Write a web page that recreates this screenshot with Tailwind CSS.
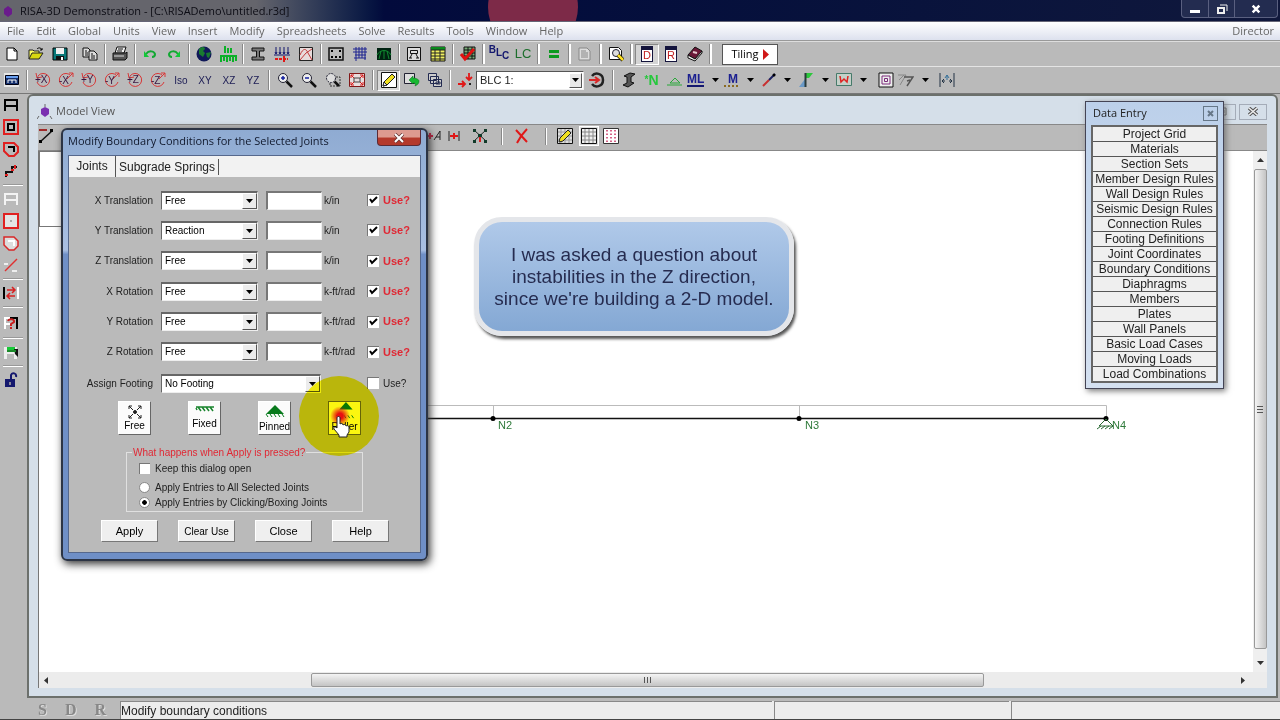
<!DOCTYPE html>
<html lang="en">
<head>
    <meta charset="UTF-8">
    <meta name="viewport" content="width=device-width, initial-scale=1.0">
    <title>RISA-3D Demonstration</title>
    <script src="https://cdn.jsdelivr.net/npm/@tailwindcss/browser@4"></script>
</head>
<body class="relative flex h-screen flex-col overflow-hidden bg-[#bababa] font-['Liberation_Sans',Arial,sans-serif] text-[11px] text-[#222]">

    <!-- Title bar -->
    <header class="relative flex h-[22px] shrink-0 items-center overflow-hidden border-b border-[#667] bg-linear-to-r from-[#65656c] from-20% via-[#020a3c] via-30% to-[#10183c] font-['Open_Sans',sans-serif]">
        <svg class="ml-[2px] size-3" viewBox="0 0 12 12"><path d="M6 1l4 3v5l-4 3-4-3V4z" fill="#6a1b8c"/></svg>
        <h1 class="ml-[6px] flex-1 text-[11px] leading-5 text-[#0c0c14]">RISA-3D Demonstration - [C:\RISADemo\untitled.r3d]</h1>
        <div class="absolute -top-[38px] left-[488px] size-[90px] rounded-full bg-[#7d2a48]"></div>
        <div class="mr-[2px] flex h-[18px] self-start rounded-b border border-t-0 border-[#5a6080] bg-[#232c50]">
            <button aria-label="Minimize" class="flex w-[27px] items-center justify-center border-r border-[#5a6080]"><svg class="size-3" viewBox="0 0 12 12"><path d="M1 7h10v3H1z" fill="#fff"/></svg></button>
            <button aria-label="Restore" class="flex w-[26px] items-center justify-center border-r border-[#5a6080]"><svg class="size-3" viewBox="0 0 12 12" fill="none" stroke="#eee" stroke-width="2"><path d="M2 5h6v5H2z"/><path d="M4 2h7v6" stroke-width="1"/></svg></button>
            <button aria-label="Close" class="flex w-[42px] items-center justify-center"><svg class="size-[10px]" viewBox="0 0 12 12" stroke="#fff" stroke-width="3"><path d="M2 2l8 8M10 2l-8 8"/></svg></button>
        </div>
    </header>

    <!-- Menu -->
    <nav class="flex h-[19px] shrink-0 items-center gap-[12px] border-b border-[#999] bg-linear-to-b from-white to-[#dde1ee] pr-[6px] pl-[7px] font-['Open_Sans',sans-serif] text-[11px] text-[#666]">
        <a href="#">File</a><a href="#">Edit</a><a href="#">Global</a><a href="#">Units</a><a href="#">View</a><a href="#">Insert</a><a href="#">Modify</a><a href="#">Spreadsheets</a><a href="#">Solve</a><a href="#">Results</a><a href="#">Tools</a><a href="#">Window</a><a href="#">Help</a>
        <a href="#" class="ml-auto">Director</a>
    </nav>

    <!-- Main toolbar -->
    <div class="flex h-[26px] shrink-0 items-center border-t border-b border-t-[#ddd] border-b-[#e4e4e4]">
        <button aria-label="New" class="flex w-6 justify-center"><svg class="size-4" viewBox="0 0 16 16"><path d="M3 2h7l3 3v9H3z" fill="#fff" stroke="#000"/><path d="M10 2v3h3" fill="none" stroke="#000"/></svg></button>
        <button aria-label="Open" class="flex w-6 justify-center"><svg class="size-4" viewBox="0 0 16 16"><path d="M1 13V4h4l1 1h5v3" fill="#ffff60" stroke="#222"/><path d="M1 13l3-6h11l-4 6z" fill="#d8d810" stroke="#222"/><path d="M9 3c2-2 4-1 5 1m0-2v2h-2" fill="none" stroke="#000"/></svg></button>
        <button aria-label="Save" class="flex w-6 justify-center"><svg class="size-4" viewBox="0 0 16 16"><path d="M1 2h14v12H1z" fill="#087878" stroke="#000"/><path d="M4 2h8v6H4z" fill="#eee"/><path d="M4 10h8v4H4z" fill="#111"/><path d="M9 11h2v3H9z" fill="#fff"/></svg></button>
        <span class="mx-[2px] h-[20px] w-[2px] border-l border-[#888] bg-white"></span>
        <button aria-label="Copy" class="flex w-6 justify-center"><svg class="size-4" viewBox="0 0 16 16" fill="#ddd" stroke="#111"><path d="M1 2h5l2 2v7H1z"/><path d="M7 5h5l3 3v6H7z"/><path d="M3 5h2M3 7h3M3 9h3M9 8h2M9 10h4M9 12h4"/></svg></button>
        <span class="mx-[2px] h-[20px] w-[2px] border-l border-[#888] bg-white"></span>
        <button aria-label="Print" class="flex w-6 justify-center"><svg class="size-4" viewBox="0 0 16 16"><path d="M5 1h9l-2 6H3z" fill="#eee" stroke="#111"/><path d="M6 3h5M5 5h5" stroke="#111"/><path d="M1 7h13l1-1v6l-2 2H1z" fill="#555" stroke="#111"/><path d="M2 10h10" stroke="#ddd"/></svg></button>
        <span class="mx-[2px] h-[20px] w-[2px] border-l border-[#888] bg-white"></span>
        <button aria-label="Undo" class="flex w-6 justify-center"><svg class="size-4" viewBox="0 0 16 16" fill="none" stroke="#12a832" stroke-width="2"><path d="M4 8c3-4 8-3 9 0 0 2-1 3-3 3"/><path d="M2 5v6h5z" fill="#12c838" stroke="none"/></svg></button>
        <button aria-label="Redo" class="flex w-6 justify-center"><svg class="size-4" viewBox="0 0 16 16" fill="none" stroke="#12a832" stroke-width="2"><path d="M12 8c-3-4-8-3-9 0 0 2 1 3 3 3"/><path d="M14 5v6H9z" fill="#12c838" stroke="none"/></svg></button>
        <span class="mx-[2px] h-[20px] w-[2px] border-l border-[#888] bg-white"></span>
        <button aria-label="Global parameters" class="flex w-6 justify-center"><svg class="size-4" viewBox="0 0 16 16"><circle cx="8" cy="8" r="7.5" fill="#101858"/><path d="M3 3c3-3 6-2 6 0L7 5l2 2-2 4-4-3zM10 7l5-1-2 6-2-1z" fill="#197a30"/></svg></button>
        <button aria-label="Units" class="flex w-6 justify-center"><svg class="size-[18px]" viewBox="0 0 18 18" fill="#0cb028"><path d="M5 1h2v7H5zM8 3h2v5H8zM11 3h2v5h-2zM1 10h2v7H1zM4 10h2v6H4zM7 10h2v7H7zM10 10h2v6h-2zM13 10h2v7h-2zM16 10h2v6h-2z"/><path d="M1 10h17v2H1z"/></svg></button>
        <span class="mx-[2px] h-[20px] w-[2px] border-l border-[#888] bg-white"></span>
        <button aria-label="Sections" class="flex w-6 justify-center"><svg class="size-4" viewBox="0 0 16 16"><path d="M2 2h12v3H9.500v6H14v3H2v-3h4.500V5H2z" fill="#777" stroke="#111"/></svg></button>
        <button aria-label="Loads" class="flex w-6 justify-center"><svg class="size-4" viewBox="0 0 16 16" fill="none" stroke="#14186e"><path d="M0 9h16M2 1v7M6 1v7M10 1v7M14 1v7M1 6l1 2 1-2M5 6l1 2 1-2M9 6l1 2 1-2M13 6l1 2 1-2"/><path d="M1 13h13M10 10v6" stroke="#e01818" stroke-width="2" stroke-dasharray="3 1"/></svg></button>
        <button aria-label="Design" class="flex w-6 justify-center"><svg class="size-4" viewBox="0 0 16 16"><path d="M1.500 1.500h13v13h-13z" fill="#e8dcdc" stroke="#222"/><path d="M2 9c3-7 6-7 8-2l4 7M2 14l6-7 6-4" fill="none" stroke="#c23b3b"/></svg></button>
        <span class="mx-[2px] h-[20px] w-[2px] border-l border-[#888] bg-white"></span>
        <button aria-label="Joints" class="flex w-6 justify-center"><svg class="size-4" viewBox="0 0 16 16"><path d="M1 2h14v12H1z" fill="#bbb" stroke="#111" stroke-width="1.500"/><path d="M3 4h2v2H3zM11 4h2v2h-2zM3 10h2v2H3zM7 10h2v2H7zM11 10h2v2h-2z" fill="#000"/></svg></button>
        <button aria-label="Grid" class="flex w-6 justify-center"><svg class="size-4" viewBox="0 0 16 16" fill="none" stroke="#1c2390"><path d="M4 1v14M7 1v11M10 1v11M13 1v13M1 3h14M1 6h14M3 9h11M2 12h12"/></svg></button>
        <button aria-label="Deflection" class="flex w-6 justify-center"><svg class="size-4" viewBox="0 0 16 16"><path d="M1 2h14v12H1z" fill="#021"/><path d="M1 9c3-6 11-6 14 0M8 4v9M5 5l-2 8M11 5l2 8" fill="none" stroke="#118a30"/></svg></button>
        <span class="mx-[2px] h-[20px] w-[2px] border-l border-[#888] bg-white"></span>
        <button aria-label="Model view" class="flex w-6 justify-center"><svg class="size-4" viewBox="0 0 16 16" fill="none" stroke="#111"><path d="M1.500 1.500h13v13h-13z" fill="#ddd"/><path d="M4.500 4.500h7v3h-7zM4 12l2-4M12 12l-2-4M3 12h3M10 12h3"/></svg></button>
        <button aria-label="Spreadsheet" class="flex w-6 justify-center"><svg class="size-4" viewBox="0 0 16 16"><path d="M1 1h14v14H1z" fill="#f0f060" stroke="#111"/><path d="M1 1h14v3H1z" fill="#0a8a1c"/><path d="M1 4h14M1 7h14M1 10h14M1 13h14M5 4v11M10 4v11" stroke="#222"/></svg></button>
        <span class="mx-[2px] h-[20px] w-[2px] border-l border-[#888] bg-white"></span>
        <button aria-label="Check" class="flex w-6 justify-center"><svg class="size-[18px]" viewBox="0 0 18 18"><path d="M5 2h11v12H5z" fill="#7a7" stroke="#111"/><path d="M5 5h11M5 8h11M5 11h11M9 2v12M13 2v12" stroke="#111"/><path d="M2 9l4 5L15 4" fill="none" stroke="#e01010" stroke-width="3"/></svg></button>
        <span class="mx-[2px] h-[20px] w-[3px] border-l border-[#888] bg-white"></span>
        <button aria-label="Basic load cases" class="flex h-5 w-6 items-start justify-center text-[10px] leading-3 font-bold text-[#14186e]"><span>B</span><span class="mt-[3px]">L</span><span class="mt-[6px]">C</span></button>
        <button aria-label="Load combinations" class="flex w-6 justify-center text-[13px] text-[#1c6e2c]">LC</button>
        <span class="mx-[2px] h-[20px] w-[3px] border-l border-[#888] bg-white"></span>
        <button aria-label="Solve" class="flex w-6 justify-center"><svg class="size-4" viewBox="0 0 16 16"><path d="M3 4h10v3H3zM3 9h10v3H3z" fill="#0c9a20"/></svg></button>
        <span class="mx-[2px] h-[20px] w-[3px] border-l border-[#888] bg-white"></span>
        <button aria-label="Report" class="flex w-6 justify-center"><svg class="size-4" viewBox="0 0 16 16" stroke="#888"><path d="M2 2h8l3 3v9H2z" fill="#ddd"/><path d="M4 5h5M4 7h7M4 9h7M4 11h7"/></svg></button>
        <span class="mx-[2px] h-[20px] w-[3px] border-l border-[#888] bg-white"></span>
        <button aria-label="Find" class="flex w-6 justify-center"><svg class="size-4" viewBox="0 0 16 16"><path d="M1.500 1.500h9l3 3v9h-12z" fill="#fff" stroke="#111"/><circle cx="8" cy="7" r="3.500" fill="#ddd" stroke="#223"/><path d="M10 9l5 5" stroke="#111" stroke-width="4"/><path d="M10 9l5 5" stroke="#ffe020" stroke-width="2.500"/></svg></button>
        <span class="mx-[2px] h-[20px] w-[3px] border-l border-[#888] bg-white"></span>
        <button aria-label="Data entry" class="flex h-[21px] w-6 items-center justify-center border border-t-[#888] border-r-white border-b-white border-l-[#888] bg-[#d4d4d4]"><span class="h-4 w-3 border border-t-4 border-[#14143c] bg-white text-[11px] leading-[11px] text-[#c02020]">D</span></button>
        <button aria-label="Results" class="flex w-6 justify-center"><span class="h-4 w-3 border border-t-4 border-[#14143c] bg-white text-[11px] leading-[11px] text-[#c02020]">R</span></button>
        <button aria-label="Help" class="flex w-6 justify-center"><svg class="size-4" viewBox="0 0 16 16"><path d="M1 9l7-8 7 4-7 8z" fill="#6a1838" stroke="#111"/><path d="M1 9v3l7 3 7-8V5l-7 8z" fill="#eee" stroke="#111"/><path d="M6 6l4 1" stroke="#e8c8d0" stroke-width="2"/></svg></button>
        <span class="mx-[2px] h-[20px] w-[3px] border-l border-[#888] bg-white"></span>
        <button class="ml-2 flex h-[21px] w-[56px] items-center justify-center gap-1 border border-[#555] bg-white font-['Open_Sans',sans-serif] text-[11px] text-black">Tiling <svg class="h-[11px] w-[6px]" viewBox="0 0 6 11"><path d="M0 0l6 5.500L0 11z" fill="#d01818"/></svg></button>
    </div>

    <!-- View toolbar -->
    <div class="flex h-[27px] shrink-0 items-center border-b border-[#777]">
        <button aria-label="Window" class="flex h-[19px] w-[23px] items-center justify-center"><svg class="size-4" viewBox="0 0 16 16"><path d="M0 1h15v14H0z" fill="#e6e6e6"/><path d="M1.500 3.500h13v9h-13z" fill="#15306e" stroke="#001"/><path d="M2 4h12v2H2z" fill="#6aa0f0"/><path d="M4 11V8h8v3M8 8v3" fill="none" stroke="#fff"/></svg></button>
        <span class="mx-[3px] h-[20px] w-[2px] border-l border-[#888] bg-white"></span>
        <button class="relative flex w-[23px] justify-center"><svg class="size-4" viewBox="0 0 16 16" fill="none" stroke="#d83838"><path d="M3 4a6.500 6.500 0 1 1-1 6"/><path d="M1 1l1 5 5-1"/></svg><span class="absolute top-[3px] left-[4px] text-[10px] leading-[10px] text-[#3a1440]">+X</span></button>
        <button class="relative flex w-[23px] justify-center"><svg class="size-4" viewBox="0 0 16 16" fill="none" stroke="#d83838"><path d="M13 4a6.500 6.500 0 1 0 1 6"/><path d="M9 7l6-6M11 1h4v4"/></svg><span class="absolute top-[4px] left-[5px] text-[10px] leading-[10px] text-[#3a1440]">-X</span></button>
        <button class="relative flex w-[23px] justify-center"><svg class="size-4" viewBox="0 0 16 16" fill="none" stroke="#d83838"><path d="M3 4a6.500 6.500 0 1 1-1 6"/><path d="M1 1l1 5 5-1"/></svg><span class="absolute top-[3px] left-[4px] text-[10px] leading-[10px] text-[#3a1440]">+Y</span></button>
        <button class="relative flex w-[23px] justify-center"><svg class="size-4" viewBox="0 0 16 16" fill="none" stroke="#d83838"><path d="M13 4a6.500 6.500 0 1 0 1 6"/><path d="M9 7l6-6M11 1h4v4"/></svg><span class="absolute top-[4px] left-[5px] text-[10px] leading-[10px] text-[#3a1440]">-Y</span></button>
        <button class="relative flex w-[23px] justify-center"><svg class="size-4" viewBox="0 0 16 16" fill="none" stroke="#d83838"><path d="M3 4a6.500 6.500 0 1 1-1 6"/><path d="M1 1l1 5 5-1"/></svg><span class="absolute top-[3px] left-[4px] text-[10px] leading-[10px] text-[#3a1440]">+Z</span></button>
        <button class="relative flex w-[23px] justify-center"><svg class="size-4" viewBox="0 0 16 16" fill="none" stroke="#d83838"><path d="M13 4a6.500 6.500 0 1 0 1 6"/><path d="M9 7l6-6M11 1h4v4"/></svg><span class="absolute top-[4px] left-[5px] text-[10px] leading-[10px] text-[#3a1440]">-Z</span></button>
        <button class="w-6 text-[10px] text-[#1c1c54]">Iso</button>
        <button class="w-6 text-[10px] text-[#1c1c54]">XY</button>
        <button class="w-6 text-[10px] text-[#1c1c54]">XZ</button>
        <button class="w-6 text-[10px] text-[#1c1c54]">YZ</button>
        <span class="mx-[3px] h-[20px] w-[2px] border-l border-[#888] bg-white"></span>
        <button aria-label="Zoom in" class="flex w-6 justify-center"><svg class="size-4" viewBox="0 0 16 16" fill="none"><circle cx="6" cy="6" r="4.500" fill="#eee" stroke="#223"/><path d="M9.500 9.500L15 15" stroke="#111" stroke-width="2.500"/><path d="M4 6h4M6 4v4" stroke="#1420a0" stroke-width="1.500"/></svg></button>
        <button aria-label="Zoom out" class="flex w-6 justify-center"><svg class="size-4" viewBox="0 0 16 16" fill="none"><circle cx="6" cy="6" r="4.500" fill="#eee" stroke="#223"/><path d="M9.500 9.500L15 15" stroke="#111" stroke-width="2.500"/><path d="M4 6h4" stroke="#1420a0" stroke-width="1.500"/></svg></button>
        <button aria-label="Zoom box" class="flex w-6 justify-center"><svg class="size-4" viewBox="0 0 16 16" fill="none"><path d="M5 5h10v9H5z" stroke="#333" stroke-dasharray="2 1"/><circle cx="6" cy="6" r="4.500" fill="#ddd" stroke="#223" stroke-dasharray="2 1"/><path d="M9.500 9.500L14 14" stroke="#111" stroke-width="2.500"/></svg></button>
        <button aria-label="Full model" class="flex w-6 justify-center"><svg class="size-4" viewBox="0 0 16 16" fill="none"><path d="M.5 1.500h15v13H.5z" fill="#e8dede" stroke="#811818"/><path d="M5 6h6v4H5z" stroke="#444"/><path d="M2 6V3h3M11 3h3v3M14 10v3h-3M5 13H2v-3M2 3l3 3M14 3l-3 3M2 13l3-3M14 13l-3-3" stroke="#d81818"/></svg></button>
        <span class="mx-[3px] h-[20px] w-[2px] border-l border-[#888] bg-white"></span>
        <button aria-label="Draw" class="flex h-[21px] w-[23px] items-center justify-center border border-t-[#888] border-r-white border-b-white border-l-[#888] bg-[#d8d8d8]"><svg class="size-4" viewBox="0 0 16 16"><path d="M.5.5h15v15H.5z" fill="#fff" stroke="#111"/><path d="M2 14l1-4 8-8 3 3-8 8z" fill="#f0e020" stroke="#222"/><path d="M2 14l1-4 3 3z" fill="#eee" stroke="#222"/></svg></button>
        <button aria-label="Copy view" class="flex w-[23px] justify-center"><svg class="size-4" viewBox="0 0 16 16"><path d="M.5 1.500h10v10H.5z" fill="#ddd" stroke="#223"/><path d="M5 8l4-4v2c4 0 6 2 6 3 0 3-2 4-4 5 1-3 0-3-2-3v1z" fill="#16b830" stroke="#0a6a1a" stroke-width=".5"/></svg></button>
        <button aria-label="Clone" class="flex w-[23px] justify-center"><svg class="size-4" viewBox="0 0 16 16" fill="#ccc" stroke="#222a50"><path d="M1.500 1.500h8v7h-8zM3.500 4.500h8v7h-8zM6.500 7.500h8v7h-8zM9 10h4v2H9z"/></svg></button>
        <span class="mx-[3px] h-[20px] w-[2px] border-l border-[#888] bg-white"></span>
        <button aria-label="Load arrows" class="flex w-[22px] justify-center"><svg class="size-4" viewBox="0 0 16 16" fill="none" stroke="#e01818" stroke-width="1.800"><path d="M12 1v7M9 5l3 3 3-3M1 12h7M5 9l3 3-3 3"/><path d="M12 11h2v2h-2z" fill="#222" stroke="none"/></svg></button>
        <div class="relative">
            <select aria-label="Load case" class="h-[19px] w-[108px] appearance-none border border-t-[#555] border-r-[#eee] border-b-[#eee] border-l-[#555] bg-white px-[3px] text-[11px] leading-4 text-[#222]"><option>BLC 1:</option></select>
            <span class="pointer-events-none absolute top-[2px] right-[2px] flex h-[15px] w-[13px] items-center justify-center border border-t-white border-r-[#555] border-b-[#555] border-l-white bg-[#e8e8e8]"><svg class="h-1 w-[7px]" viewBox="0 0 7 4"><path d="M0 0h7L3.500 4z"/></svg></span>
        </div>
        <button aria-label="Regenerate" class="ml-px flex w-6 justify-center"><svg class="size-4" viewBox="0 0 16 16" fill="none"><path d="M3 4c3-4 11-3 11 4s-8 8-11 4" stroke="#222" stroke-width="2.500"/><path d="M0 8h10M6 5l4 3-4 3" stroke="#d82828" stroke-width="2"/></svg></button>
        <span class="mx-[3px] h-[20px] w-[2px] border-l border-[#888] bg-white"></span>
        <button aria-label="Rendering" class="flex w-[23px] justify-center"><svg class="size-4" viewBox="0 0 16 16"><path d="M3 4l6-3 5 1-4 3v5l3 1-6 4-5-2 4-2V5z" fill="#555" stroke="#111"/></svg></button>
        <button aria-label="Node labels" class="flex w-[23px] justify-center text-[14px] leading-4 font-bold text-[#26c83c]"><span class="text-[10px]">*</span>N</button>
        <button aria-label="Boundary conditions" class="flex w-[23px] justify-center"><svg class="size-4" viewBox="0 0 16 16" fill="none" stroke="#28a838"><path d="M8 6L3 11h10zM0 13h15"/></svg></button>
        <button aria-label="Member labels" class="flex w-[37px] items-center gap-2 pl-px"><span class="border-b-2 border-[#14186e] text-[12px] leading-[11px] font-bold text-[#1c2090]">ML</span><svg class="h-1 w-[7px]" viewBox="0 0 7 4"><path d="M0 0h7L3.500 4z"/></svg></button>
        <button aria-label="Member display" class="flex w-[38px] items-center gap-[9px] pl-px"><span class="border-b-2 border-dotted border-[#8a6a20] pl-1 text-[12px] leading-[11px] font-bold text-[#1c2090]">M</span><svg class="h-1 w-[7px]" viewBox="0 0 7 4"><path d="M0 0h7L3.500 4z"/></svg></button>
        <button aria-label="Member ends" class="flex w-[37px] items-center gap-[7px]"><svg class="size-4" viewBox="0 0 16 16"><path d="M2 14L8 8" stroke="#c83030" stroke-width="2"/><path d="M8 8l6-6" stroke="#1c2060" stroke-width="2"/><circle cx="13" cy="3" r="1.500"/></svg><svg class="h-1 w-[7px]" viewBox="0 0 7 4"><path d="M0 0h7L3.500 4z"/></svg></button>
        <button aria-label="Flags" class="flex w-[38px] items-center gap-2"><svg class="size-4" viewBox="0 0 16 16"><path d="M8 1h7l-4 5H8z" fill="#2cc83c"/><path d="M7 15V7l-6 8z" fill="#6a9ac8"/><path d="M7.500 1v14" stroke="#2a3a3a" stroke-width="2"/></svg><svg class="h-1 w-[7px]" viewBox="0 0 7 4"><path d="M0 0h7L3.500 4z"/></svg></button>
        <button aria-label="Wall display" class="flex w-[38px] items-center gap-2"><svg class="size-4" viewBox="0 0 16 16" fill="none"><path d="M.5 1.500h15v12H.5z" fill="#c4d0c8" stroke="#467a6a"/><path d="M4 4l1 6 3-3 3 3 1-6" stroke="#e02020" stroke-width="1.500"/></svg><svg class="h-1 w-[7px]" viewBox="0 0 7 4"><path d="M0 0h7L3.500 4z"/></svg></button>
        <button aria-label="Panels" class="flex w-[23px] justify-center"><svg class="size-4" viewBox="0 0 16 16" fill="none"><path d="M1 1h14v14H1z" fill="#eee" stroke="#111"/><path d="M4 4h8v8H4zM6.500 6.500h3v3h-3z" stroke="#7a2a7a"/></svg></button>
        <button aria-label="Plates" class="flex w-[38px] items-center gap-2 pl-px"><svg class="size-4" viewBox="0 0 16 16" fill="none" stroke="#555"><path d="M0 3h8L2 13M1 8l5-5" stroke="#888"/><path d="M6 5h9L9 14M9 9l3-1" stroke-width="1.500"/></svg><svg class="h-1 w-[7px]" viewBox="0 0 7 4"><path d="M0 0h7L3.500 4z"/></svg></button>
        <button aria-label="Distance" class="flex w-6 justify-center"><svg class="size-4" viewBox="0 0 16 16" fill="none" stroke="#234"><path d="M1 1v14M15 1v14"/><path d="M3 9h3M10 9h3M5 7L3 9l2 2M11 7l2 2-2 2"/><path d="M8 3v5M6 6l2-3 2 3" stroke="#35709a"/></svg></button>
    </div>

    <div class="flex min-h-0 flex-1">
        <!-- Selection strip -->
        <aside class="flex w-[27px] shrink-0 flex-col pl-[3px]">
            <button aria-label="Select all" class="flex h-[22px] items-center"><svg class="size-4" viewBox="0 0 16 16" fill="none" stroke="#000" stroke-width="2"><path d="M2 14V3h12v11M2 9h12"/></svg></button>
            <button aria-label="Box select" class="flex h-[22px] items-center"><svg class="size-4" viewBox="0 0 16 16" fill="none"><path d="M1 1h14v14H1z" stroke="#e02020" stroke-width="2"/><path d="M5 5h6v6H5z" stroke="#000" stroke-width="2"/></svg></button>
            <button aria-label="Polygon select" class="flex h-[22px] items-center"><svg class="size-4" viewBox="0 0 16 16" fill="none"><path d="M1 2h10l4 4v5l-4 4H6l-5-5z" stroke="#e02020" stroke-width="2"/><path d="M5 6h6v5" stroke="#000" stroke-width="2"/></svg></button>
            <button aria-label="Line select" class="flex h-[22px] items-center"><svg class="size-4" viewBox="0 0 16 16" fill="none"><path d="M3 14V9h6V4h5" stroke="#111" stroke-width="2"/><path d="M2 12h3M8 7h3M12 2v4" stroke="#e02020" stroke-width="2"/></svg></button>
            <span class="my-[2px] mr-1 h-[2px] shrink-0 border-t border-[#999] bg-white"></span>
            <button aria-label="Unselect all" class="flex h-[22px] items-center"><svg class="size-4" viewBox="0 0 16 16" fill="none" stroke="#f4f4f4" stroke-width="2"><path d="M2 14V3h12v11M2 9h12"/></svg></button>
            <button aria-label="Box unselect" class="flex h-[22px] items-center"><svg class="size-4" viewBox="0 0 16 16"><path d="M1 1h14v14H1z" fill="#e4e4e4" stroke="#e02020" stroke-width="2"/><path d="M7 7h2v2H7z" fill="#aaa"/></svg></button>
            <button aria-label="Polygon unselect" class="flex h-[22px] items-center"><svg class="size-4" viewBox="0 0 16 16"><path d="M1 2h10l4 4v5l-4 4H6l-5-5z" fill="#ddd" stroke="#d82828" stroke-width="1.500"/><path d="M5 6h6v5" fill="none" stroke="#fff" stroke-width="2"/></svg></button>
            <button aria-label="Line unselect" class="flex h-[22px] items-center"><svg class="size-4" viewBox="0 0 16 16"><path d="M1 7h4M9 14h5" stroke="#eee" stroke-width="2"/><path d="M2 14L14 2" stroke="#e03030" stroke-width="1.500"/></svg></button>
            <span class="my-[2px] mr-1 h-[2px] shrink-0 border-t border-[#999] bg-white"></span>
            <button aria-label="Invert" class="flex h-[22px] items-center"><svg class="size-4" viewBox="0 0 16 16" fill="none"><path d="M1 2v12" stroke="#000" stroke-width="2"/><path d="M15 2v12" stroke="#fff" stroke-width="2"/><path d="M4 5h8M9 2l3 3-3 3M12 11H4M7 8l-3 3 3 3" stroke="#d82020" stroke-width="1.500"/></svg></button>
            <span class="my-[2px] mr-1 h-[2px] shrink-0 border-t border-[#999] bg-white"></span>
            <button aria-label="Criteria" class="flex h-[25px] items-center"><svg class="size-4" viewBox="0 0 16 16" fill="none"><path d="M2 14V3h7M2 9h6" stroke="#fff" stroke-width="2"/><path d="M7 3h7v11" stroke="#000" stroke-width="2"/><path d="M5 6c1-3 7-2 6 1L8 9v2M8 12v2" stroke="#c82020" stroke-width="2"/></svg></button>
            <span class="my-[2px] mr-1 h-[2px] shrink-0 border-t border-[#999] bg-white"></span>
            <button aria-label="Save selection" class="flex h-[22px] items-center"><svg class="size-4" viewBox="0 0 16 16"><path d="M1 3h13v12h-3v-5H4v5H1z" fill="#eee"/><path d="M4 3h8v3H4z" fill="#18c838"/><path d="M11 5h4v8l-3-3z" fill="#111"/><path d="M4 6h9v2H4z" fill="#1a8a2a"/></svg></button>
            <span class="my-[2px] mr-1 h-[2px] shrink-0 border-t border-[#999] bg-white"></span>
            <button aria-label="Lock" class="flex h-[22px] items-center"><svg class="size-4" viewBox="0 0 16 16"><path d="M2 7h10v8H2z" fill="#14186e"/><path d="M8 7V3c1-3 6-2 5 2" fill="none" stroke="#14186e" stroke-width="2"/><path d="M6 10h2v3H6z" fill="#889"/></svg></button>
        </aside>

        <!-- Model view window -->
        <main class="mr-[2px] mb-[3px] flex min-w-0 flex-1 flex-col rounded-t-md border-2 border-[#6c706c] bg-[#d5dfe9] px-[9px] pb-2">
            <div class="flex h-[28px] shrink-0 items-center pt-[3px] font-['Open_Sans',sans-serif] text-[11px] text-[#555]">
                <svg class="-ml-px size-4" viewBox="0 0 16 16"><path d="M8 3l4 2v5l-4 3-4-3V5z" fill="#7a30b0"/><path d="M8 3V0M2 12l-2 3M13 12l2 3" stroke="#666"/></svg>
                <h2 class="ml-[3px] flex-1">Model View</h2>
                <button aria-label="Restore window" class="mr-[3px] flex h-4 w-[28px] items-center justify-center border border-[#a4acb8]"><svg class="size-[9px]" viewBox="0 0 9 9" fill="none" stroke="#555"><path d="M1 1h7v7H1zM3 3h3v3H3z"/></svg></button>
                <button aria-label="Close window" class="flex h-4 w-[28px] items-center justify-center border border-[#a4acb8]"><svg class="h-[9px] w-[10px]" viewBox="0 0 10 9"><path d="M1 1l8 7M9 1L1 8" stroke="#555" stroke-width="3.500"/><path d="M1 1l8 7M9 1L1 8" stroke="#eee" stroke-width="1.500"/></svg></button>
            </div>
            <div class="flex h-[27px] shrink-0 items-center border-t border-b border-[#888] bg-[#bababa] pb-[3px]">
                <svg class="size-4" viewBox="0 0 16 16"><path d="M1 2h8" stroke="#a02a2a" stroke-width="2"/><path d="M2 14L14 3" stroke="#111" stroke-width="1.500"/><path d="M12 1h3v3h-3zM1 12h3v3H1z"/></svg>
                <div class="ml-[373px] flex items-center">
                    <svg class="h-4 w-[18px]" viewBox="0 0 18 16" fill="none"><path d="M3 5v6M0 8h6" stroke="#c02040" stroke-width="2"/><path d="M7 12l6-9v9M9 9h4" stroke="#222"/></svg>
                    <svg class="ml-[3px] h-4 w-[12px]" viewBox="0 0 12 16"><path d="M1 3v10M11 3v10" stroke="#222"/><path d="M2 8h8M6 5v6" stroke="#e01818" stroke-width="2"/></svg>
                    <svg class="ml-[12px] size-4" viewBox="0 0 16 16"><path d="M2 2l12 11M14 2L2 13" stroke="#222"/><path d="M1 1h3v3H1zM12 1h3v3h-3zM6 6h4v3H6zM1 12h3v3H1zM12 12h3v3h-3z" fill="#123a2a"/><path d="M8 9v5" stroke="#d82020" stroke-width="2"/></svg>
                    <span class="ml-[13px] h-[17px] w-[2px] border-l border-[#888] bg-white"></span>
                    <button aria-label="Delete" class="ml-[12px]"><svg class="block h-4 w-[14px]" viewBox="0 0 14 16" fill="none" stroke="#e01818" stroke-width="2"><path d="M1 2l11 12M12 1C7 6 5 9 2 15"/></svg></button>
                    <span class="ml-[16px] h-[17px] w-[2px] border-l border-[#888] bg-white"></span>
                    <button aria-label="Edit grid" class="ml-[10px]"><svg class="block size-4" viewBox="0 0 16 16"><path d="M.5.5h15v15H.5z" fill="#ddd" stroke="#111"/><path d="M4 1v14M8 1v14M12 1v14M1 4h14M1 8h14M1 12h14" stroke="#999"/><path d="M2 14l1-4 8-8 3 3-8 8z" fill="#f0e020" stroke="#222"/></svg></button>
                    <button aria-label="Show grid" class="ml-[6px] border border-white bg-[#ddd] p-px"><svg class="block size-4" viewBox="0 0 16 16"><path d="M.5.5h15v15H.5z" fill="#eee" stroke="#111"/><path d="M4 1v14M8 1v14M12 1v14M1 4h14M1 8h14M1 12h14" stroke="#888"/></svg></button>
                    <button aria-label="Snap points" class="ml-[4px]"><svg class="block size-4" viewBox="0 0 16 16"><path d="M.5.5h15v15H.5z" fill="#fff" stroke="#333"/><path d="M4 2v13M8 2v13M12 2v13" stroke="#c83060" stroke-width="1.500" stroke-dasharray="1.500 2"/></svg></button>
                </div>
            </div>
            <div class="flex min-h-0 flex-1 border-l border-[#777] bg-white">
                <div class="relative min-w-0 flex-1 overflow-hidden">
                    <div class="absolute top-0 left-0 h-[76px] w-[60px] border border-[#777]"></div>
                    <!-- Beam with four joints -->
                    <svg class="absolute top-[250px] left-[381px] h-[40px] w-[720px] text-[11px]" viewBox="0 0 720 40">
                        <path d="M0 4.500h686.500v13M73.500 4.500v13M379.500 4.500v13" fill="none" stroke="#bbb"/>
                        <path d="M0 17.500h687" stroke="#111" stroke-width="1.500"/>
                        <circle cx="73" cy="17.500" r="2.500"/><circle cx="379" cy="17.500" r="2.500"/><circle cx="686" cy="17.500" r="2.500"/>
                        <path d="M686 18l-7 7h14zM677 28l4-3M681 28l4-3M685 28l4-3M689 28l4-3" fill="none" stroke="#2a6a34"/>
                        <text x="78" y="28" fill="#2f7a3a">N2</text><text x="385" y="28" fill="#2f7a3a">N3</text><text x="692" y="28" fill="#2f7a3a">N4</text>
                    </svg>
                    <p class="absolute top-[66px] left-[435px] flex h-[119px] w-[320px] items-center justify-center rounded-[28px] border-[5px] border-[#e4e6ea] bg-linear-to-b from-[#b0c9e9] to-[#84a8d4] text-center text-[19px] leading-[22px] text-[#262c50] shadow-[2px_3px_3px_#555]">I was asked a question about<br>instabilities in the Z direction,<br>since we're building a 2-D model.</p>
                </div>
                <div class="flex w-[14px] shrink-0 flex-col items-center bg-[#efefef]">
                    <svg class="my-[7px] h-1 w-[7px]" viewBox="0 0 7 4"><path d="M0 4h7L3.500 0z" fill="#333"/></svg>
                    <div class="flex w-[13px] flex-1 items-center justify-center rounded-xs border border-[#999] bg-linear-to-r from-[#f4f4f4] to-[#c4c4c4]"><span class="flex h-[7px] w-[6px] items-center border-y border-[#555]"><span class="h-px w-full bg-[#555]"></span></span></div>
                    <svg class="mt-[12px] mb-[7px] h-1 w-[7px]" viewBox="0 0 7 4"><path d="M0 0h7L3.500 4z" fill="#333"/></svg>
                </div>
            </div>
            <div class="flex h-[16px] shrink-0 items-center border-l border-[#777] bg-[#ececec] pr-[22px] pl-[5px]">
                <svg class="h-[7px] w-1" viewBox="0 0 4 7"><path d="M4 0v7L0 3.500z" fill="#333"/></svg>
                <div class="ml-[263px] flex h-[14px] w-[56%] items-center justify-center rounded-xs border border-[#999] bg-linear-to-b from-[#f4f4f4] to-[#c4c4c4]"><span class="flex h-[6px] w-[7px] justify-center border-x border-[#555]"><span class="h-full w-px bg-[#555]"></span></span></div>
                <svg class="ml-auto h-[7px] w-1" viewBox="0 0 4 7"><path d="M0 0v7l4-3.500z" fill="#333"/></svg>
            </div>
        </main>
    </div>

    <!-- Status bar -->
    <footer class="flex h-[19px] shrink-0 border-b border-[#444] bg-[#ececec]">
        <div class="flex w-[120px] items-center gap-[18px] bg-[#bababa] pl-[38px] font-['Liberation_Serif',serif] text-[16px] leading-4 font-bold text-[#888] [text-shadow:1px_1px_#ddd]"><span>S</span><span>D</span><span>R</span></div>
        <div class="w-[652px] border-t border-l border-[#888] text-[12px] leading-[18px]">Modify boundary conditions</div>
        <div class="ml-[2px] w-[235px] border-t border-l border-[#888]"></div>
        <div class="ml-[2px] flex-1 border-t border-l border-[#888]"></div>
    </footer>

    <!-- Data entry palette -->
    <section class="absolute top-[101px] right-[56px] w-[139px] border border-[#445] bg-linear-to-b from-[#bcd0ea] to-[#d4e0f0] px-[5px] pb-[5px] shadow-[2px_2px_6px_#777]">
        <div class="flex h-[23px] items-center justify-between pl-[2px] font-['Open_Sans',sans-serif] text-[11px]">
            <h2>Data Entry</h2>
            <button aria-label="Close palette" class="flex size-[15px] items-center justify-center border border-[#678]"><svg class="size-[7px]" viewBox="0 0 7 7"><path d="M1 1l5 5M6 1L1 6" stroke="#678" stroke-width="2"/></svg></button>
        </div>
        <div id="entries" class="flex flex-col gap-px border-2 border-[#666] bg-[#555] text-center text-[12px] leading-[14px]"></div>
    </section>

    <!-- Boundary conditions dialog -->
    <section role="dialog" aria-labelledby="dlgTitle" class="absolute top-[128px] left-[61px] w-[367px] rounded-md border-2 border-[#2c3444] bg-linear-to-b from-[#8fabd2] via-[#a9bfe2] via-28% to-[#6f8fc6] to-29% px-[5px] pb-[6px] shadow-[2px_3px_8px_#333]">
        <div class="flex h-[25px] justify-between font-['Open_Sans',sans-serif]">
            <h2 id="dlgTitle" class="text-[11px] leading-[22px] font-medium text-[#10182c]">Modify Boundary Conditions for the Selected Joints</h2>
            <button aria-label="Close dialog" class="flex h-[16px] w-[44px] items-center justify-center rounded-b border border-t-0 border-[#5c2a34] bg-linear-to-b from-[#dd9a90] from-45% to-[#b4392c] to-55%"><svg class="size-[10px]" viewBox="0 0 10 10"><path d="M1 1l8 8M9 1L1 9" stroke="#633" stroke-width="3.500"/><path d="M1 1l8 8M9 1L1 9" stroke="#fff" stroke-width="2"/></svg></button>
        </div>
        <div class="border border-[#56688c] bg-[#bababa] pb-[10px] text-[10px]">
            <div role="tablist" class="flex h-[21px] items-center bg-[#f2f2f2] text-[12px]">
                <button role="tab" aria-selected="true" class="h-full w-[47px] border-r border-[#555] pb-[2px]">Joints</button>
                <button role="tab" class="mt-px h-[16px] w-[103px] border-r border-[#555] leading-4 whitespace-nowrap">Subgrade Springs</button>
            </div>
            <div class="mt-[13px] flex h-[203px] flex-col justify-between">
                <div id="restraints" class="flex h-[172px] flex-col justify-between"></div>
                <div class="flex h-5 items-center"><label for="footing" class="w-[84px] text-right">Assign Footing</label>
                    <div class="relative ml-2"><select id="footing" class="block h-[19px] w-[160px] appearance-none border border-t-2 border-t-[#666] border-r-[#eee] border-b-[#eee] border-l-[#666] bg-white px-[3px] leading-4 text-black"><option>No Footing</option></select><span class="pointer-events-none absolute top-[2px] right-px flex h-4 w-[15px] items-center justify-center border border-t-white border-r-[#555] border-b-[#555] border-l-white bg-[#ececec]"><svg class="h-1 w-[7px]" viewBox="0 0 7 4"><path d="M0 0h7L3.500 4z"/></svg></span></div>
                    <label class="ml-[46px] flex items-center gap-[4px]"><input type="checkbox" class="absolute size-3 appearance-none"><svg class="size-3 bg-white" viewBox="0 0 12 12"><path d="M0 12V0h12" fill="none" stroke="#777" stroke-width="2"/></svg>Use?</label></div>
            </div>
            <div class="mt-[8px] ml-[49px] flex gap-[37px] leading-[11px] text-black">
                <button class="flex h-[34px] w-[33px] flex-col items-center justify-end border border-t-white border-r-[#666] border-b-[#666] border-l-white bg-[#fbfbfb] pb-[3px]"><svg class="size-4" viewBox="0 0 16 16" fill="none" stroke="#222"><circle cx="8" cy="8" r="1.500" fill="#222"/><path d="M2 2l4 4M10 10l4 4M14 2l-4 4M6 10l-4 4M2 5V2h3M11 2h3v3M14 11v3h-3M5 14H2v-3"/></svg>Free</button>
                <button class="flex h-[34px] w-[33px] flex-col items-center justify-end border border-t-white border-r-[#666] border-b-[#666] border-l-white bg-[#fbfbfb] pb-[5px]"><svg class="h-[13px] w-[20px]" viewBox="0 0 20 13" stroke="#18842c" stroke-width="1.500"><path d="M1 2h18M2 5l-1-2M6 6L3 2M10 6L7 2M14 6l-3-4M18 6l-3-4"/></svg>Fixed</button>
                <button class="flex h-[34px] w-[33px] flex-col items-center justify-end border border-t-white border-r-[#666] border-b-[#666] border-l-white bg-[#fbfbfb] pb-[2px]"><svg class="h-[14px] w-[20px]" viewBox="0 0 20 14"><path d="M10 0l9 9H1z" fill="#087a1c"/><path d="M3 12l-2-3M7 12L5 9M11 12L9 9M15 12l-2-3M19 12l-2-3" stroke="#087a1c"/></svg><span class="mt-[2px]">Pinned</span></button>
                <button class="flex h-[34px] w-[33px] flex-col items-center justify-end border border-[#666] bg-[#fbfbfb] pb-[2px]"><svg class="h-[20px] w-[20px]" viewBox="0 0 20 20"><path d="M11 0l7 8H4z" fill="#087a1c"/><path d="M3 17l-2-3M7 17l-2-3M11 17l-2-3M15 17l-2-3M19 17l-2-3" stroke="#087a1c"/></svg>Roller</button>
            </div>
            <fieldset class="mx-[57px] mt-[11px] flex h-[66px] flex-col border border-[#e0e0e0] pl-[12px]">
                <legend class="-ml-[7px] px-px leading-[13px] text-[#e02834]">What happens when Apply is pressed?</legend>
                <label class="mt-[3px] flex h-[13px] items-center gap-[5px]"><input type="checkbox" class="size-[11px] appearance-none border-t border-l border-[#777] bg-white">Keep this dialog open</label>
                <label class="mt-[6px] flex h-[13px] items-center gap-[5px]"><input type="radio" name="mode" class="size-[11px] appearance-none rounded-full border border-[#888] bg-white">Apply Entries to All Selected Joints</label>
                <label class="mt-[2px] flex h-[13px] items-center gap-[5px] whitespace-nowrap"><input type="radio" name="mode" checked class="size-[11px] appearance-none rounded-full border border-[#888] bg-white bg-radial from-black from-30% to-white to-40%">Apply Entries by Clicking/Boxing Joints</label>
            </fieldset>
            <div class="mt-[8px] ml-[32px] flex gap-[20px] text-[11px] text-black">
                <button class="h-[22px] w-[57px] border border-t-white border-r-[#777] border-b-[#777] border-l-white bg-[#efefef]">Apply</button>
                <button class="h-[22px] w-[57px] border border-t-white border-r-[#777] border-b-[#777] border-l-white bg-[#efefef] text-[10px]">Clear Use</button>
                <button class="h-[22px] w-[57px] border border-t-white border-r-[#777] border-b-[#777] border-l-white bg-[#efefef]">Close</button>
                <button class="h-[22px] w-[57px] border border-t-white border-r-[#777] border-b-[#777] border-l-white bg-[#efefef]">Help</button>
            </div>
        </div>
    </section>

    <!-- Click highlight and pointer -->
    <div class="pointer-events-none absolute top-[376px] left-[299px] size-[80px] rounded-full bg-[#fffa10] mix-blend-multiply"></div>
    <div class="pointer-events-none absolute top-[406px] left-[330px] size-[20px] rounded-full bg-radial from-[#e81010] from-20% to-transparent to-70%"></div>
    <svg class="pointer-events-none absolute top-[415px] left-[332px] h-[24px] w-[18px]" viewBox="0 0 18 24"><path d="M5 13V3c0-2 3-2 3 0v6c1-1 3-1 3 1 1-1 3-1 3 1 1-1 3 0 3 1v5l-2 3v2H7v-2l-5-6c-1-2 1-3 3-1z" fill="#fff" stroke="#222"/></svg>

    <script>
        const entries = ['Project Grid', 'Materials', 'Section Sets', 'Member Design Rules', 'Wall Design Rules',
            'Seismic Design Rules', 'Connection Rules', 'Footing Definitions', 'Joint Coordinates', 'Boundary Conditions',
            'Diaphragms', 'Members', 'Plates', 'Wall Panels', 'Basic Load Cases', 'Moving Loads', 'Load Combinations'];
        document.getElementById('entries').innerHTML = entries.map(name =>
            `<button class="h-[14px] bg-[#efefef] whitespace-nowrap">${name}</button>`).join('');

        const restraints = [
            ['X Translation', 'Free', 'k/in'],
            ['Y Translation', 'Reaction', 'k/in'],
            ['Z Translation', 'Free', 'k/in'],
            ['X Rotation', 'Free', 'k-ft/rad'],
            ['Y Rotation', 'Free', 'k-ft/rad'],
            ['Z Rotation', 'Free', 'k-ft/rad'],
        ];
        document.getElementById('restraints').innerHTML = restraints.map(([name, value, unit], i) => `
            <div class="flex h-5 items-center">
                <label for="restraint${i}" class="w-[84px] text-right">${name}</label>
                <div class="relative ml-2">
                    <select id="restraint${i}" class="block h-[19px] w-[97px] appearance-none border border-t-2 border-t-[#666] border-r-[#eee] border-b-[#eee] border-l-[#666] bg-white px-[3px] leading-4 text-black"><option>${value}</option></select>
                    <span class="pointer-events-none absolute top-[2px] right-px flex h-4 w-[15px] items-center justify-center border border-t-white border-r-[#555] border-b-[#555] border-l-white bg-[#ececec]"><svg class="h-1 w-[7px]" viewBox="0 0 7 4"><path d="M0 0h7L3.500 4z"/></svg></span>
                </div>
                <input aria-label="${name} value" class="ml-2 h-[19px] w-[56px] border border-t-2 border-l-2 border-t-[#777] border-r-[#eee] border-b-[#eee] border-l-[#777] bg-white">
                <span class="ml-[2px] w-[43px]">${unit}</span>
                <label class="flex items-center gap-[4px] text-[11px] font-bold text-[#e02834]"><input type="checkbox" checked class="absolute size-3 appearance-none"><svg class="size-3 bg-white" viewBox="0 0 12 12"><path d="M0 12V0h12" fill="none" stroke="#777" stroke-width="2"/><path d="M3 5l2 3 5-5" fill="none" stroke="#000" stroke-width="2"/></svg>Use?</label>
            </div>`).join('');
    </script>
</body>
</html>
